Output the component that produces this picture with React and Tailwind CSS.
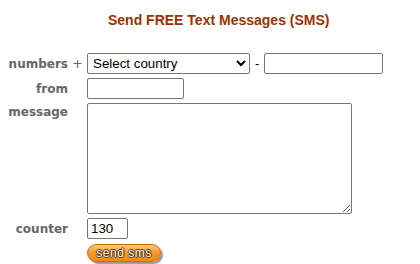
import { useState } from 'react'

const LABEL = 'text-[12px] font-bold text-[#666666] text-right'
const FIELD = 'border border-[#767676] rounded-[2px] bg-white text-[13.33px] text-black px-[3px]'

export default function App() {
  const [msg, setMsg] = useState('')

  return (
    <div className="w-[420px] h-[264px] bg-white overflow-hidden" style={{ fontFamily: '"DejaVu Sans", Verdana, sans-serif' }}>
      {/* title */}
      <h1 className="pt-[12px] pl-[108px] text-[14px] font-bold text-[#993300] leading-[16px] font-['Liberation_Sans',Arial,sans-serif]">
        Send FREE Text Messages (SMS)
      </h1>

      <div className="mt-[25px] grid grid-cols-[68px_19px_auto] items-center gap-y-[4px]">
        {/* numbers */}
        <div className={LABEL}>numbers</div>
        <div className="text-[13px] text-[#666666] pl-[4px]">+</div>
        <div className="flex items-center font-['Liberation_Sans',Arial,sans-serif]">
          <select className={`${FIELD} w-[163px] h-[21px] pl-[1px]`} defaultValue="">
            <option value="">Select country</option>
            <option>United States</option>
            <option>United Kingdom</option>
          </select>
          <span className="mx-[5px] text-[13px] text-black">-</span>
          <input className={`${FIELD} w-[119px] h-[21px]`} />
        </div>

        {/* from */}
        <div className={LABEL}>from</div>
        <div />
        <div className="font-['Liberation_Sans',Arial,sans-serif]">
          <input className={`${FIELD} w-[97px] h-[21px] block`} />
        </div>

        {/* message */}
        <div className={`${LABEL} self-start`}>message</div>
        <div />
        <div className="font-['Liberation_Sans',Arial,sans-serif]">
          <textarea
            className={`${FIELD} w-[265px] h-[111px] block`}
            value={msg}
            onChange={e => setMsg(e.target.value.slice(0, 130))}
          />
        </div>

        {/* counter */}
        <div className={LABEL}>counter</div>
        <div />
        <div className="font-['Liberation_Sans',Arial,sans-serif]">
          <input className={`${FIELD} w-[41px] h-[21px] block`} value={130 - msg.length} readOnly />
        </div>

        <div />
        <div />
        <div className="pt-[1px]">
          <button className="block w-[74px] h-[18px] rounded-full border border-[#c86d10] bg-gradient-to-b from-[#fbc879] via-[#f49a2c] to-[#ee8a17] shadow-[2px_2px_1px_#9a9a9a] text-[12px] leading-[16px] text-white tracking-[0.5px] [text-shadow:1px_0_0_#5a3000,-1px_0_0_#5a3000,0_1px_0_#5a3000,0_-1px_0_#5a3000] font-['Liberation_Sans',Arial,sans-serif]">
            send sms
          </button>
        </div>
      </div>
    </div>
  )
}
